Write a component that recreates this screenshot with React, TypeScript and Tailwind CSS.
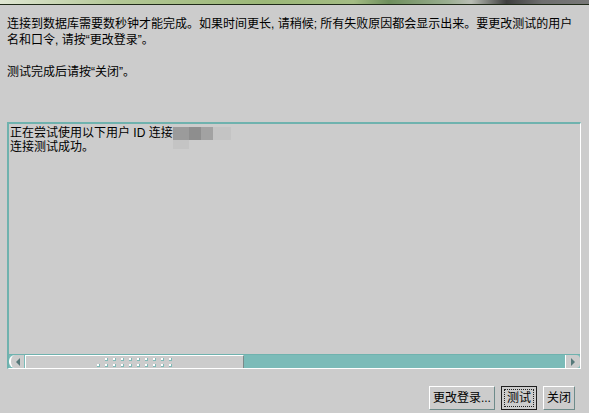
import React from 'react';

const font = "font-['Liberation_Sans','Noto_Sans_CJK_SC',sans-serif]";

const Grip = () => (
  <div className="flex flex-col gap-[3px] items-center">
    <div className="flex gap-[5px] pl-[4px]">
      {Array.from({ length: 9 }).map((_, i) => (
        <span key={i} className="w-[3px] h-[3px] bg-white border-r border-b border-[#7fb9b6]" />
      ))}
    </div>
    <div className="flex gap-[5px] pr-[4px]">
      {Array.from({ length: 10 }).map((_, i) => (
        <span key={i} className="w-[3px] h-[3px] bg-white border-r border-b border-[#7fb9b6]" />
      ))}
    </div>
  </div>
);

const Button = ({ label, focused }: { label: string; focused?: boolean }) =>
  focused ? (
    <button className="h-[24px] px-[2px] border border-[#1e1e1e] bg-[#cccccc] flex items-center">
      <span className="h-[18px] px-[2px] border border-dotted border-[#222] flex items-center text-[12px] leading-none text-black">
        {label}
      </span>
    </button>
  ) : (
    <button className="h-[24px] px-[3px] border border-t-white border-l-white border-b-[#6d8b8a] border-r-[#6d8b8a] bg-[#cccccc] flex items-center text-[12px] leading-none text-black">
      {label}
    </button>
  );

export default function App() {
  return (
    <div className={`w-[589px] h-[413px] bg-[#cccccc] flex flex-col overflow-hidden text-black ${font}`}>
      {/* window title strip */}
      <div className="h-[4px] bg-[linear-gradient(90deg,#dfe6d2_0%,#b3c796_20%,#9cb878_45%,#a4bc84_60%,#6e8e5c_66%,#9aae90_76%,#b9bdb4_80%,#3e3e3e_86%,#6e6e6e_92%,#787878_100%)]" />
      <div className="h-[1px] bg-[#1f2a18]" />

      {/* instructions */}
      <div className="pl-[7px] pt-[11px] text-[12px] leading-[16px] whitespace-nowrap">
        <div>连接到数据库需要数秒钟才能完成。如果时间更长, 请稍候; 所有失败原因都会显示出来。要更改测试的用户</div>
        <div>名和口令, 请按“更改登录”。</div>
        <div className="h-[16px]" />
        <div>测试完成后请按“关闭”。</div>
      </div>

      {/* output box */}
      <div className="mt-[42px] ml-[7px] w-[574px] h-[247px] flex flex-col border-t-2 border-l-2 border-t-[#6fb2ae] border-l-[#6fb2ae] border-r border-b border-r-white border-b-white">
        <div className="flex-1 pl-[1px] pt-[2px] text-[12px] leading-[14px] whitespace-nowrap">
          <div className="flex items-center">
            <span>正在尝试使用以下用户 ID 连接</span>
            <span className="relative inline-block w-[60px] h-[14px]">
              <span className="absolute left-0 top-[1px] flex blur-[0.6px]">
                <span className="w-[16px] h-[13px] bg-[#9b9b9b]" />
                <span className="w-[12px] h-[13px] bg-[#8e8e8e]" />
                <span className="w-[12px] h-[13px] bg-[#a2a2a2]" />
                <span className="w-[18px] h-[13px] bg-[#c4c4c4]" />
              </span>
              <span className="absolute left-0 top-[14px] w-[16px] h-[9px] bg-[#c4c4c4] blur-[0.6px]" />
            </span>
          </div>
          <div>连接测试成功。</div>
        </div>

        {/* horizontal scrollbar */}
        <div className="h-[14px] flex border-t border-[#6fb2ae] bg-[#7bbbb8]">
          <div className="w-[15px] bg-[#cccccc] rounded-l-[6px] border-l-2 border-white flex items-center justify-center">
            <span className="w-0 h-0 border-y-[4px] border-y-transparent border-r-[4px] border-r-[#56797a]" />
          </div>
          <div className="w-[219px] ml-[1px] bg-[#cccccc] border-t border-l border-white border-r border-r-[#7a8a8a] flex items-center justify-center">
            <div className="pl-[4px]">
              <Grip />
            </div>
          </div>
          <div className="flex-1" />
          <div className="w-[15px] bg-[#cccccc] rounded-r-[4px] border-l border-white flex items-center justify-center">
            <span className="w-0 h-0 border-y-[4px] border-y-transparent border-l-[4px] border-l-[#56797a]" />
          </div>
        </div>
      </div>

      {/* buttons */}
      <div className="mt-[17px] pr-[14px] flex justify-end gap-[6px]">
        <Button label="更改登录..." />
        <Button label="测试" focused />
        <Button label="关闭" />
      </div>
    </div>
  );
}
